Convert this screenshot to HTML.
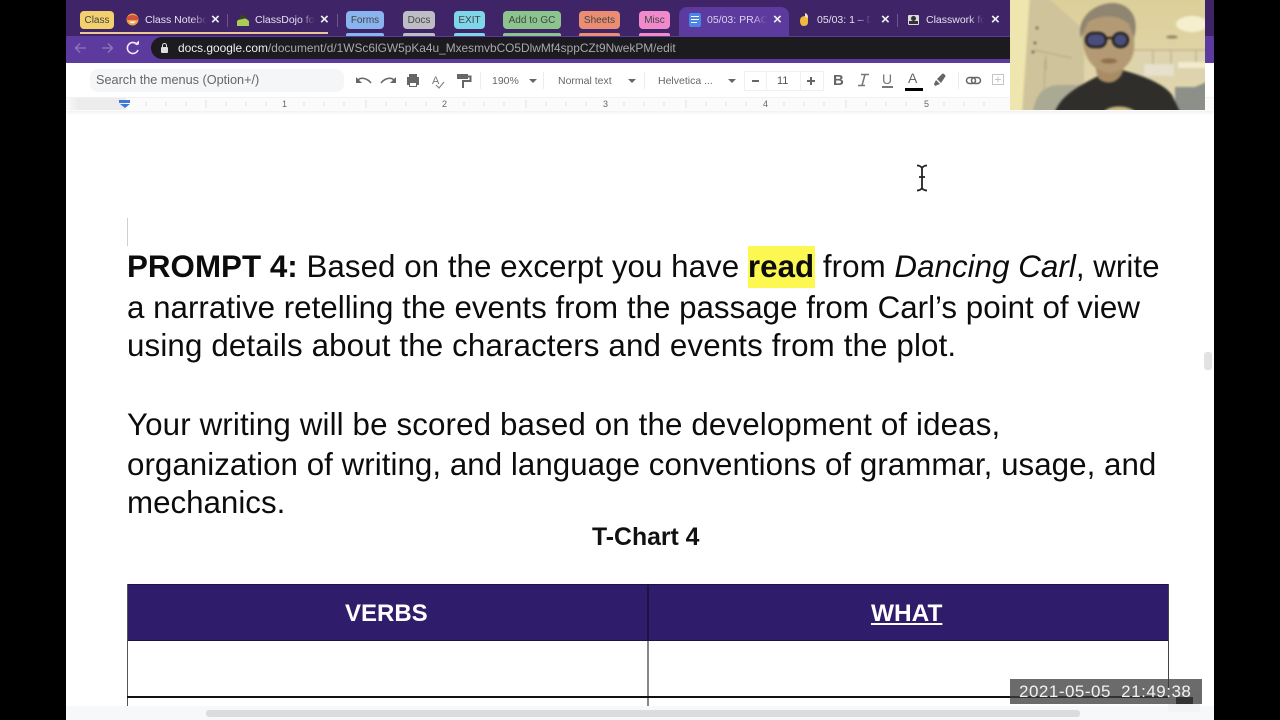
<!DOCTYPE html>
<html>
<head>
<meta charset="utf-8">
<style>
html,body{margin:0;padding:0;width:1280px;height:720px;overflow:hidden;background:#000;font-family:"Liberation Sans",sans-serif}
.a{position:absolute;white-space:nowrap}
.bm{position:absolute;top:11px;height:18px;border-radius:4px;font-size:10px;line-height:19px;text-align:center;color:#444}
.ul{position:absolute;top:33px;height:3px;border-radius:2px 2px 0 0}
.tt{position:absolute;top:13px;font-size:10.5px;color:#e6e0ee;line-height:14px;white-space:nowrap;overflow:hidden;-webkit-mask-image:linear-gradient(90deg,#000 75%,transparent);mask-image:linear-gradient(90deg,#000 75%,transparent)}
.x{position:absolute;top:11px;font-size:15px;line-height:18px;color:#eee;font-weight:bold}
.tl{position:absolute;top:74px;font-size:10.5px;color:#666;line-height:14px;white-space:nowrap}
.rn{position:absolute;top:99px;font-size:9px;line-height:10px;color:#666}
.l{position:absolute;left:127px;white-space:nowrap;font-size:31.3px;line-height:36px;color:#0c0c0c}
.sep{position:absolute;top:72px;width:1px;height:17px;background:#ececec}
.car{position:absolute;top:79px;border:4px solid transparent;border-top:4px solid #666}
</style>
</head>
<body>
<div style="position:absolute;left:66px;top:0;width:1148px;height:720px;background:#fff"></div>

<!-- tab strip -->
<div class="a" style="left:66px;top:0;width:1148px;height:36px;background:#3f2568"></div>
<div class="a" style="left:66px;top:36px;width:1148px;height:27px;background:#5c3a9e"></div>
<div class="bm" style="left:80px;width:34px;background:#f2d06e">Class</div>
<div class="a" style="left:80px;top:32px;width:248px;height:2px;background:#ecc698"></div>
<svg class="a" style="left:126px;top:13px" width="13" height="13" viewBox="0 0 13 13">
<circle cx="6.500" cy="6.500" r="6" fill="#e8a24a"/><path d="M1 4Q6.500 0 12 4L12 7H1Z" fill="#d8503c"/><path d="M3 8.500Q6.500 12 10 8.500Z" fill="#fff"/>
</svg>
<div class="tt" style="left:145px;width:62px">Class Notebo</div>
<div class="x" style="left:211px">×</div>
<div class="a" style="left:227px;top:14px;width:1px;height:13px;background:#6d5690"></div>
<svg class="a" style="left:236px;top:13px" width="14" height="14" viewBox="0 0 14 14">
<path d="M1 13V8Q7 2 13 8V13Z" fill="#a9cc55"/><path d="M2 7L6 1L11 5Z" fill="#38402a"/>
</svg>
<div class="tt" style="left:255px;width:60px">ClassDojo fo</div>
<div class="x" style="left:320px">×</div>
<div class="a" style="left:337px;top:14px;width:1px;height:13px;background:#6d5690"></div>

<div class="bm" style="left:346px;width:38px;background:#8ab4f0">Forms</div>
<div class="ul" style="left:346px;width:38px;background:#8ab4f0"></div>
<div class="bm" style="left:403px;width:32px;background:#bdbdc6">Docs</div>
<div class="ul" style="left:403px;width:32px;background:#bdbdc6"></div>
<div class="bm" style="left:454px;width:31px;background:#7fd6e8">EXIT</div>
<div class="ul" style="left:454px;width:31px;background:#7fd6e8"></div>
<div class="bm" style="left:503px;width:58px;background:#8cc48e">Add to GC</div>
<div class="ul" style="left:503px;width:58px;background:#8cc48e"></div>
<div class="bm" style="left:579px;width:41px;background:#ea8d72">Sheets</div>
<div class="ul" style="left:579px;width:41px;background:#ea8d72"></div>
<div class="bm" style="left:639px;width:31px;background:#f08acb">Misc</div>
<div class="ul" style="left:639px;width:31px;background:#f08acb"></div>

<div class="a" style="left:679px;top:7px;width:110px;height:29px;border-radius:8px 8px 0 0;background:#5c3a9e"></div>
<div class="a" style="left:689px;top:13px;width:12px;height:14px;border-radius:2px;background:#4a86e8"></div>
<div class="a" style="left:691px;top:16px;width:8px;height:1px;background:#fff"></div>
<div class="a" style="left:691px;top:19px;width:8px;height:1px;background:#fff"></div>
<div class="a" style="left:691px;top:22px;width:6px;height:1px;background:#fff"></div>
<div class="tt" style="left:707px;width:60px;color:#dcd3ee">05/03: PRAC</div>
<div class="x" style="left:773px">×</div>
<svg class="a" style="left:798px;top:12px" width="12" height="15" viewBox="0 0 12 15">
<path d="M2 9Q2 4 7 4L7 1Q10 2 10 6V10Q10 14 6 14Q2 14 2 9Z" fill="#eeb93e"/><path d="M7 1Q10 2 10 6L7 5Z" fill="#f3e2c2"/>
</svg>
<div class="tt" style="left:817px;width:54px">05/03: 1 – De</div>
<div class="x" style="left:881px">×</div>
<div class="a" style="left:897px;top:14px;width:1px;height:13px;background:#6d5690"></div>
<div class="a" style="left:908px;top:15px;width:11px;height:10px;border-radius:1px;background:#dcdcdc"></div>
<div class="a" style="left:911px;top:16px;width:5px;height:5px;border-radius:50%;background:#333"></div>
<div class="a" style="left:909px;top:21px;width:9px;height:3px;background:#333"></div>
<div class="tt" style="left:926px;width:58px">Classwork fo</div>
<div class="x" style="left:991px">×</div>

<!-- address bar -->
<svg class="a" style="left:70px;top:38px" width="80" height="20" viewBox="0 0 80 20" fill="none">
<path d="M16 10H6M10 5.500L5.500 10L10 14.500" stroke="#8f79bd" stroke-width="1.300"/>
<path d="M32 10H42M38 5.500L42.500 10L38 14.500" stroke="#8f79bd" stroke-width="1.300"/>
<path d="M67.500 7A5.500 5.500 0 1 0 68 12" stroke="#efeaf7" stroke-width="1.600"/>
<path d="M64.500 6.500H69V2.500Z" fill="#efeaf7"/>
</svg>
<div class="a" style="left:151px;top:37px;width:880px;height:22px;border-radius:11px;background:#1b1b20"></div>
<div class="a" style="left:161px;top:47px;width:7px;height:6px;border-radius:1px;background:#ddd"></div>
<div class="a" style="left:162px;top:43px;width:3px;height:3px;border:1px solid #ddd;border-bottom:0;border-radius:3px 3px 0 0"></div>
<div class="a" style="left:178px;top:41px;font-size:11.900px;line-height:14px;color:#f0f0f0">docs.google.com<span style="color:#a9a9ad">/document/d/1WSc6lGW5pKa4u_MxesmvbCO5DlwMf4sppCZt9NwekPM/edit</span></div>

<!-- toolbar -->
<div class="a" style="left:90px;top:69px;width:254px;height:23px;border-radius:8px;background:#f5f6f7"></div>
<div class="a" style="left:96px;top:72px;font-size:12.700px;line-height:16px;color:#666">Search the menus (Option+/)</div>
<svg class="a" style="left:352px;top:70px" width="126" height="22" viewBox="0 0 126 22" fill="none">
<path d="M6 10C9 7 15 8 19 13" stroke="#666" stroke-width="1.500"/><path d="M4 7V13H10Z" fill="#666"/>
<path d="M42 10C39 7 33 8 29 13" stroke="#666" stroke-width="1.500"/><path d="M44 7V13H38Z" fill="#666"/>
<path d="M55 7H67V15H55Z M57 4H65V7H57Z" fill="#666"/><rect x="57.500" y="12.500" width="7" height="4" fill="#fff" stroke="#666"/>
<text x="80" y="14" font-size="11" fill="#777" font-family="Liberation Sans">A</text>
<path d="M84 15L87 18L92 12" stroke="#888" stroke-width="1.200"/>
<path d="M105 4H116V9H105Z" fill="#666"/><path d="M116 6.500H118.500V11H111V18" stroke="#666" stroke-width="2"/>
</svg>
<div class="sep" style="left:480px"></div>
<div class="tl" style="left:492px">190%</div>
<div class="car" style="left:529px"></div>
<div class="sep" style="left:543px"></div>
<div class="tl" style="left:558px">Normal text</div>
<div class="car" style="left:628px"></div>
<div class="sep" style="left:644px"></div>
<div class="tl" style="left:658px">Helvetica ...</div>
<div class="car" style="left:728px"></div>
<div class="a" style="left:744px;top:71px;width:78px;height:18px;border:1px solid #f0f0f0"></div>
<div class="a" style="left:766px;top:71px;width:1px;height:19px;background:#f0f0f0"></div>
<div class="a" style="left:800px;top:71px;width:1px;height:19px;background:#f0f0f0"></div>
<div class="a" style="left:752px;top:80px;width:7px;height:1.500px;background:#666"></div>
<div class="a" style="left:777px;top:74px;font-size:11px;line-height:14px;color:#555">11</div>
<div class="a" style="left:807px;top:80px;width:8px;height:1.500px;background:#666"></div>
<div class="a" style="left:810px;top:77px;width:1.500px;height:8px;background:#666"></div>
<div class="a" style="left:833px;top:72px;font-size:15px;font-weight:bold;line-height:17px;color:#666">B</div>
<svg class="a" style="left:856px;top:72px" width="14" height="16" viewBox="0 0 14 16" fill="none"><path d="M5 2.500H13M2 13.500H9M9 2.500L6 13.500" stroke="#777" stroke-width="1.500"/></svg>
<div class="a" style="left:882px;top:71px;font-size:14px;line-height:16px;color:#777">U</div>
<div class="a" style="left:882px;top:86px;width:11px;height:1.500px;background:#777"></div>
<div class="a" style="left:908px;top:70px;font-size:14px;line-height:16px;color:#666">A</div>
<div class="a" style="left:905px;top:88px;width:18px;height:3px;background:#000"></div>
<svg class="a" style="left:932px;top:72px" width="78" height="18" viewBox="0 0 78 18" fill="none">
<path d="M2 12L4 8L8 12L3 14Z M5 7L10 2Q11 1 12 2L13 3Q14 4 13 5L9 11Z" fill="#666"/>
<rect x="34.500" y="5.500" width="9" height="6" rx="3" stroke="#666" stroke-width="1.500"/>
<rect x="39.500" y="5.500" width="9" height="6" rx="3" stroke="#666" stroke-width="1.500"/>
<rect x="60.500" y="2.500" width="11" height="10" stroke="#c4c4c4"/>
<path d="M66 4.500V10.500M63 7.500H69" stroke="#c4c4c4"/>
</svg>
<div class="sep" style="left:958px"></div>

<!-- ruler -->
<div class="a" style="left:66px;top:97px;width:1148px;height:13px;background:#fbfbfb;border-top:1px solid #f2f2f2;box-shadow:0 2px 3px rgba(0,0,0,.06)"></div>
<div class="a" style="left:66px;top:98px;width:60px;height:12px;background:linear-gradient(90deg,#fafafa,#ececec 20%,#ececec)"></div>
<div class="a" style="left:119px;top:100px;width:11px;height:3px;background:#3f78d8"></div>
<div class="a" style="left:120px;top:104px;border:5px solid transparent;border-top:4px solid #3f78d8;border-bottom:0"></div>
<svg class="a" style="left:126px;top:100px" width="880" height="8" viewBox="0 0 880 8">
<path d="M20 2v4M40 2v4M60 2v4M80 0v8M100 2v4M120 2v4M140 2v4M178 2v4M198 2v4M218 2v4M240 0v8M260 2v4M280 2v4M300 2v4M338 2v4M358 2v4M378 2v4M400 0v8M420 2v4M440 2v4M460 2v4M498 2v4M518 2v4M538 2v4M560 0v8M580 2v4M600 2v4M620 2v4M658 2v4M678 2v4M698 2v4M720 0v8M740 2v4M760 2v4M780 2v4M818 2v4M838 2v4M858 2v4" stroke="#e0e0e0" fill="none"/>
</svg>
<div class="rn" style="left:282px">1</div>
<div class="rn" style="left:442px">2</div>
<div class="rn" style="left:603px">3</div>
<div class="rn" style="left:763px">4</div>
<div class="rn" style="left:924px">5</div>

<!-- doc text -->
<div class="a" style="left:127px;top:218px;width:1px;height:28px;background:#cfcfcf"></div>
<div class="a" style="left:748px;top:246px;width:67px;height:42px;background:#fdf851"></div>
<div class="l" style="top:249px;letter-spacing:.04px"><b>PROMPT 4:</b> Based on the excerpt you have <b>read</b> from <i>Dancing Carl</i>, write</div>
<div class="l" style="top:290px;letter-spacing:.015px">a narrative retelling the events from the passage from Carl’s point of view</div>
<div class="l" style="top:328px;letter-spacing:.135px">using details about the characters and events from the plot.</div>
<div class="l" style="top:407px;letter-spacing:.13px">Your writing will be scored based on the development of ideas,</div>
<div class="l" style="top:447px;letter-spacing:.04px">organization of writing, and language conventions of grammar, usage, and</div>
<div class="l" style="top:485px">mechanics.</div>
<div class="a" style="left:592px;top:524px;font-size:24.800px;line-height:28px;font-weight:bold;color:#111">T-Chart 4</div>

<!-- table -->
<div class="a" style="left:127px;top:584px;width:1042px;height:57px;background:#2f1d6b;border-top:1.500px solid #1c1440;border-bottom:1.500px solid #1c1440;box-sizing:border-box"></div>
<div class="a" style="left:127px;top:584px;width:1px;height:122px;background:#555"></div>
<div class="a" style="left:647px;top:641px;width:2px;height:65px;background:#888"></div>
<div class="a" style="left:647px;top:584px;width:2px;height:57px;background:#1c1440"></div>
<div class="a" style="left:1168px;top:584px;width:1px;height:122px;background:#444"></div>
<div class="a" style="left:127px;top:696px;width:1042px;height:1.500px;background:#111"></div>
<div class="a" style="left:345px;top:600px;font-size:24px;line-height:28px;font-weight:bold;color:#fff">VERBS</div>
<div class="a" style="left:871px;top:600px;font-size:24.400px;line-height:28px;font-weight:bold;color:#fff;text-decoration:underline">WHAT</div>

<!-- bottom scrollbar, right scrollbar -->
<div class="a" style="left:66px;top:706px;width:1148px;height:14px;background:#f7f8fa"></div>
<div class="a" style="left:206px;top:710px;width:874px;height:7px;border-radius:3px;background:#dcdcdc"></div>
<div class="a" style="left:1204px;top:352px;width:8px;height:18px;border-radius:3px;background:#e2e2e2"></div>
<div class="a" style="left:1168px;top:690px;width:32px;height:22px;background:#fafafa"></div>

<!-- timestamp -->
<div class="a" style="left:1010px;top:679px;width:192px;height:25px;background:rgba(60,60,60,.76)"></div>
<div class="a" style="left:1168px;top:704px;width:32px;height:8px;background:#f4f4f4"></div>
<div class="a" style="left:1176px;top:697px;width:17px;height:7px;background:#333"></div>
<div class="a" style="left:1019px;top:682px;font-size:17px;line-height:19px;letter-spacing:.5px;word-spacing:5px;color:#f2f2f2">2021-05-05 21:49:38</div>

<!-- webcam -->
<div class="a" style="left:1010px;top:0;width:195px;height:110px;overflow:hidden;background:#dccf9c">
<svg style="position:absolute;left:-6px;top:-6px;display:block;filter:blur(1px)" width="207" height="122" viewBox="-6 -6 207 122">
<defs>
<linearGradient id="c" x1="0" y1="0" x2="0" y2="1"><stop offset="0" stop-color="#dccf98"/><stop offset="1" stop-color="#e2d8b4"/></linearGradient>
</defs>
<rect x="-6" y="-6" width="207" height="122" fill="url(#c)"/>
<path d="M18 -6H34L74 30V90H50L30 116H12Z" fill="#cfc39c"/>
<path d="M-6 -6H20L12 116H-6Z" fill="#efe5ae"/>
<path d="M24 50L62 58M36 56V70M35 60L34 100" stroke="#9b8c68" stroke-width="1" opacity=".5"/>
<circle cx="27" cy="28" r="1.500" fill="#7a6c4c"/><circle cx="25" cy="43" r="1.500" fill="#7a6c4c"/><circle cx="23" cy="52" r="1.500" fill="#7a6c4c"/>
<path d="M123 51H201V80H123Z" fill="#ddd3ae"/>
<path d="M123 50H201" stroke="#b5a87e"/>
<path d="M143 51V72M161 51V76M186 51V62" stroke="#b7a97c"/>
<rect x="134" y="64" width="30" height="12" fill="#e6e0cc"/>
<path d="M168 62H201V68H168Z" fill="#f2ebce"/>
<ellipse cx="182" cy="24" rx="16" ry="8" fill="#f6efcf"/>
<ellipse cx="162" cy="37" rx="6" ry="1.500" fill="#8d8064"/>
<path d="M22 116C25 96 32 85 50 85H100V116Z" fill="#aaa994"/>
<path d="M165 116V87H185L201 80V116Z" fill="#8c9089"/>
<path d="M43 116C50 96 65 88 88 76L112 70C135 76 155 85 162 95L172 116Z" fill="#2f2e2a"/>
<path d="M84 62L88 78C96 86 110 84 114 68Z" fill="#a98b64"/>
<path d="M73 44C71 24 82 12 102 12C118 12 126 26 124 50C122 64 112 72 100 73C86 72 76 62 73 44Z" fill="#b39a74"/>
<path d="M71 38C66 20 82 3 104 3C120 4 130 18 124 38L119 24C108 14 92 14 78 22Z" fill="#8f8570"/>
<rect x="76" y="33" width="20" height="14" rx="7" fill="#4a4e7a" stroke="#1c1a18" stroke-width="2.200"/>
<rect x="103" y="33" width="15" height="14" rx="7" fill="#4a4e7a" stroke="#1c1a18" stroke-width="2.200"/>
<path d="M96 38H103" stroke="#1c1a18" stroke-width="2"/>
<ellipse cx="99" cy="61" rx="8" ry="2.500" fill="#8e6e50"/>
<path d="M92 114C97 104 120 104 128 114Z" fill="#c9b880"/>
</svg>
</div>

<!-- I-beam cursor -->
<svg class="a" style="left:914px;top:164px" width="16" height="28" viewBox="0 0 16 28" fill="none">
<path d="M3 1.500C6 1.500 7 2.500 8 4C9 2.500 10 1.500 13 1.500M3 26.500C6 26.500 7 25.500 8 24C9 25.500 10 26.500 13 26.500M8 4V24M5 13H11" stroke="#fff" stroke-width="3.500"/>
<path d="M3 1.500C6 1.500 7 2.500 8 4C9 2.500 10 1.500 13 1.500M3 26.500C6 26.500 7 25.500 8 24C9 25.500 10 26.500 13 26.500M8 4V24M5 13H11" stroke="#222" stroke-width="1.800"/>
</svg>
</body>
</html>
